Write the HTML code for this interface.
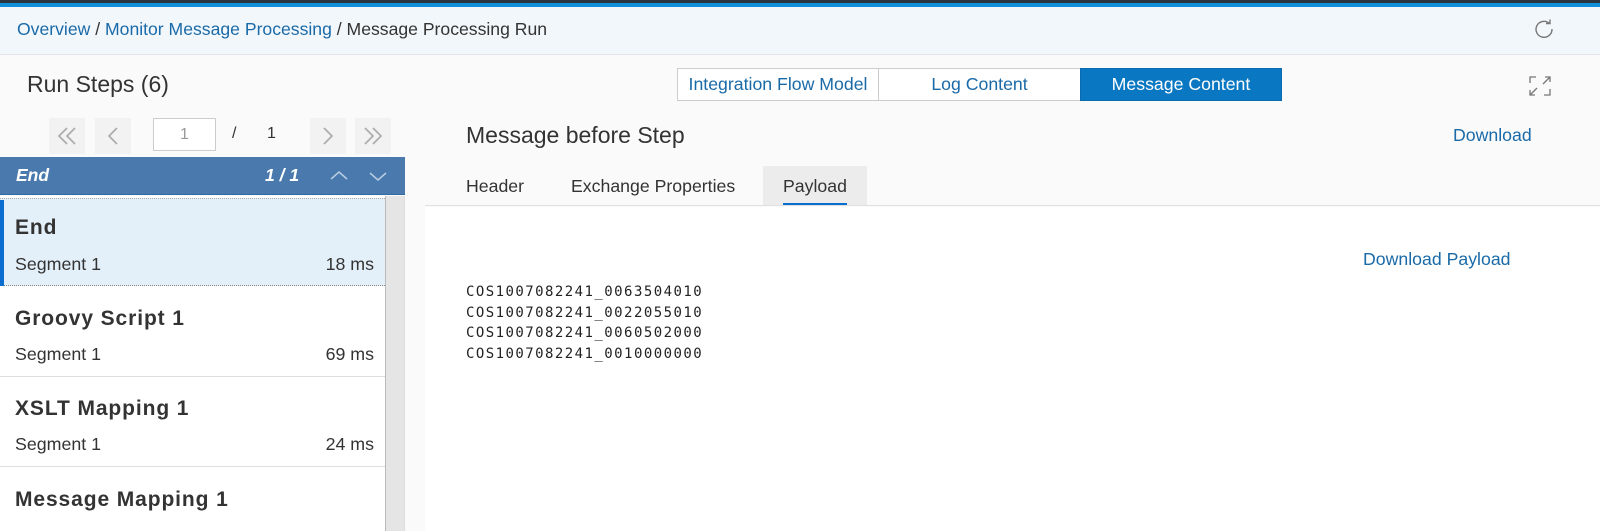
<!DOCTYPE html>
<html><head><style>
*{margin:0;padding:0;box-sizing:border-box}
body{width:1600px;height:531px;overflow:hidden;background:#fafafa;font-family:"Liberation Sans",Arial,sans-serif;position:relative}
.a{position:absolute;white-space:nowrap}
.lnk{color:#1a6aa8}
.pg{position:absolute;top:118px;width:36px;height:36px;background:#f2f2f2}
</style></head><body>
<div class="a" style="left:0;top:0;width:1600px;height:3px;background:#2a3540"></div>
<div class="a" style="left:0;top:3px;width:1600px;height:4px;background:#0f90d8"></div>
<div class="a" style="left:0;top:7px;width:1600px;height:48px;background:#f2f7fb;border-bottom:1px solid #e2e6ea"></div>
<div class="a" style="left:17px;top:19px;font-size:17.6px;color:#333"><span class="lnk">Overview</span> / <span class="lnk">Monitor Message Processing</span> / Message Processing Run</div>
<svg class="a" style="left:1533px;top:18px" width="22" height="22" viewBox="0 0 22 22"><path d="M16.5 5.5A8 8 0 1 0 19 11" fill="none" stroke="#777" stroke-width="1.4"/><path d="M13 5.5h4v-4" fill="none" stroke="#777" stroke-width="1.4"/></svg>

<div class="a" style="left:27px;top:71px;font-size:23px;color:#333">Run Steps (6)</div>

<div class="pg" style="left:49px"><svg width="36" height="36"><path d="M18 10l-8 8 8 8M26 10l-8 8 8 8" fill="none" stroke="#aaa" stroke-width="1.6"/></svg></div>
<div class="pg" style="left:95px"><svg width="36" height="36"><path d="M22 10l-8 8 8 8" fill="none" stroke="#aaa" stroke-width="1.6"/></svg></div>
<div class="a" style="left:153px;top:118px;width:63px;height:33px;background:#fff;border:1px solid #ccc;color:#999;font-size:16px;text-align:center;line-height:31px">1</div>
<div class="a" style="left:232px;top:125px;font-size:16px;color:#333">/</div>
<div class="a" style="left:267px;top:125px;font-size:16px;color:#333">1</div>
<div class="pg" style="left:310px"><svg width="36" height="36"><path d="M14 10l8 8-8 8" fill="none" stroke="#aaa" stroke-width="1.6"/></svg></div>
<div class="pg" style="left:355px"><svg width="36" height="36"><path d="M10 10l8 8-8 8M18 10l8 8-8 8" fill="none" stroke="#aaa" stroke-width="1.6"/></svg></div>

<div class="a" style="left:0;top:157px;width:405px;height:38px;background:#4a7aad;border-bottom:1px solid #2f6aa5"></div>
<div class="a" style="left:16px;top:165px;font-size:17.5px;color:#fff;font-style:italic;font-weight:bold">End</div>
<div class="a" style="left:265px;top:165px;font-size:17.5px;color:#fff;font-style:italic;font-weight:bold">1 / 1</div>
<svg class="a" style="left:330px;top:170px" width="60" height="12"><path d="M1 9l8-7 8 7M40 3l8 7 8-7" fill="none" stroke="#b9cde2" stroke-width="1.5"/></svg>

<div class="a" style="left:385px;top:196px;width:20px;height:335px;background:#e5e5e5;border-left:1px solid #bbb;border-right:1px solid #ddd"></div>
<div class="a" style="left:0;top:196px;width:385px;height:335px;background:#fff"></div>
<div class="a" style="left:0;top:198px;width:385px;height:88px;background:#e4f0f9;border-bottom:1px dotted #888;border-top:1px dotted #aaa"></div>
<div class="a" style="left:0;top:200px;width:4px;height:86px;background:#0a6ed1"></div>
<div class="a" style="left:0;top:376px;width:385px;height:1px;background:#ddd"></div>
<div class="a" style="left:0;top:466px;width:385px;height:1px;background:#ddd"></div>
<div class="a" style="left:15px;top:216px;font-size:21px;letter-spacing:0.9px;font-weight:bold;color:#333">End</div>
<div class="a" style="left:15px;top:254px;font-size:17.8px;color:#333">Segment 1</div>
<div class="a" style="left:374px;top:254px;font-size:17.8px;color:#333;transform:translateX(-100%)">18 ms</div>
<div class="a" style="left:15px;top:307px;font-size:21px;letter-spacing:0.9px;font-weight:bold;color:#333">Groovy Script 1</div>
<div class="a" style="left:15px;top:344px;font-size:17.8px;color:#333">Segment 1</div>
<div class="a" style="left:374px;top:344px;font-size:17.8px;color:#333;transform:translateX(-100%)">69 ms</div>
<div class="a" style="left:15px;top:397px;font-size:21px;letter-spacing:0.9px;font-weight:bold;color:#333">XSLT Mapping 1</div>
<div class="a" style="left:15px;top:434px;font-size:17.8px;color:#333">Segment 1</div>
<div class="a" style="left:374px;top:434px;font-size:17.8px;color:#333;transform:translateX(-100%)">24 ms</div>
<div class="a" style="left:15px;top:488px;font-size:21px;letter-spacing:0.9px;font-weight:bold;color:#333">Message Mapping 1</div>

<div class="a" style="left:677px;top:68px;width:202px;height:33px;background:#fff;border:1px solid #ccc;color:#1a6aa8;font-size:17.7px;text-align:center;line-height:31px">Integration Flow Model</div>
<div class="a" style="left:879px;top:68px;width:202px;height:33px;background:#fff;border:1px solid #ccc;border-left:none;color:#1a6aa8;font-size:17.7px;text-align:center;line-height:31px">Log Content</div>
<div class="a" style="left:1080px;top:68px;width:202px;height:33px;background:#0a77c2;border:1px solid #0a6bb0;color:#fff;font-size:17.7px;text-align:center;line-height:31px">Message Content</div>
<svg class="a" style="left:1528px;top:74px" width="24" height="24" viewBox="0 0 24 24"><path d="M2 9V3h6M22 3l-7 7M17 3h5v5M2 21l7-7M2 16v5h5M22 15v6h-6" fill="none" stroke="#777" stroke-width="1.3"/></svg>

<div class="a" style="left:466px;top:122px;font-size:23px;color:#333">Message before Step</div>
<div class="a" style="left:1453px;top:125px;font-size:17.7px;color:#1a6aa8">Download</div>
<div class="a" style="left:763px;top:166px;width:104px;height:40px;background:#ececec"></div>
<div class="a" style="left:466px;top:176px;font-size:17.7px;color:#333">Header</div>
<div class="a" style="left:571px;top:176px;font-size:17.7px;color:#333">Exchange Properties</div>
<div class="a" style="left:783px;top:176px;font-size:17.7px;color:#333">Payload</div>
<div class="a" style="left:783px;top:203px;width:64px;height:3px;background:#0a6ed1"></div>
<div class="a" style="left:425px;top:205px;width:1175px;height:1px;background:#e0e0e0"></div>
<div class="a" style="left:425px;top:207px;width:1175px;height:324px;background:#fff"></div>
<div class="a" style="left:1363px;top:249px;font-size:17.7px;color:#1a6aa8">Download Payload</div>
<pre class="a" style="white-space:pre;left:466px;top:282px;font-family:'DejaVu Sans Mono','Liberation Mono',monospace;font-size:14px;letter-spacing:1.45px;line-height:20.7px;color:#222">COS1007082241_0063504010
COS1007082241_0022055010
COS1007082241_0060502000
COS1007082241_0010000000</pre>
</body></html>
